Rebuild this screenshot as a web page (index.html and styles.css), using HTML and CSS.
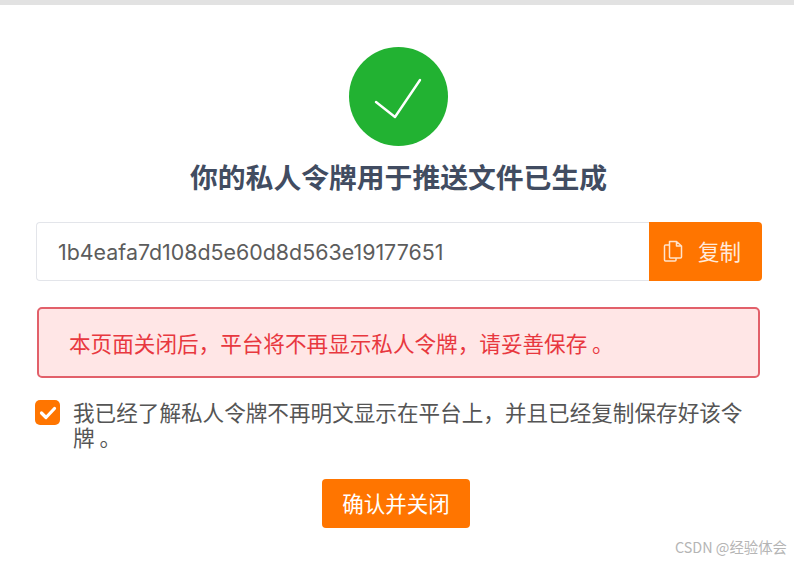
FILE: index.html
```html
<!DOCTYPE html>
<html lang="zh-CN">
  <head>
    <meta charset="UTF-8" />
    <title>私人令牌</title>
    <link rel="stylesheet" href="styles.css">
  </head>
  <body>
    <div id="root">
      <div class="top-bar"></div>
      <div class="success-icon">
        <svg width="48" height="42" viewBox="0 0 48 42">
          <path d="M2 25 L21 40 L46 3" fill="none" stroke="#fff" stroke-width="2.4" stroke-linecap="round" stroke-linejoin="round" />
        </svg>
      </div>
      <h1 class="title">你的私人令牌用于推送文件已生成</h1>
      <div class="token-row">
        <div class="token-text">1b4eafa7d108d5e60d8d563e19177651</div>
        <button class="copy-btn">
          <svg width="20" height="22" viewBox="0 0 20 22">
            <path d="M6.5 1.5 H13.5 L18.5 6 V17 Q18.5 18 17.5 18 H7.5 Q6.5 18 6.5 17 Z M13.5 1.5 V6 H18.5 M6.5 5 H2.5 Q1.5 5 1.5 6 V20 Q1.5 21 2.5 21 H12 Q13 21 13 20 V18" fill="none" stroke="#ffe3cc" stroke-width="1.5" stroke-linejoin="round" />
          </svg>
          <span>复制</span>
        </button>
      </div>
      <div class="alert">本页面关闭后，平台将不再显示私人令牌，请妥善保存 。</div>
      <div class="agree">
        <span class="checkbox">
          <svg width="18" height="14" viewBox="0 0 18 14">
            <path d="M2.5 7 L7 11.5 L15.5 2.5" fill="none" stroke="#fff" stroke-width="3.2" stroke-linecap="round" stroke-linejoin="round" />
          </svg>
        </span>
        <p class="agree-text">我已经了解私人令牌不再明文显示在平台上，并且已经复制保存好该令牌 。</p>
      </div>
      <div class="actions">
        <button class="confirm-btn">确认并关闭</button>
      </div>
      <div class="watermark">CSDN @经验体会</div>
    </div>
  </body>
</html>
```

FILE: styles.css
```css
* {
  margin: 0;
  padding: 0;
  box-sizing: border-box;
}
html,
body {
  width: 794px;
  height: 562px;
  overflow: hidden;
  background-color: #fff;
}
body {
  font-family: "Noto Sans CJK SC", "Noto Sans", sans-serif;
}
#root {
  position: relative;
  width: 794px;
  height: 562px;
  display: flex;
  flex-direction: column;
}
.top-bar {
  height: 5px;
  background-color: #e2e2e2;
}
.success-icon {
  width: 99px;
  height: 99px;
  margin: 42px auto 0;
  transform: translateX(1px);
  border-radius: 50%;
  background-color: #22b232;
  display: flex;
  justify-content: center;
  align-items: center;
}
.success-icon svg {
  margin-top: 2px;
}
.title {
  margin-top: 12px;
  padding-left: 3px;
  height: 36px;
  line-height: 36px;
  font-size: 27.8px;
  font-weight: 700;
  color: #414c61;
  text-align: center;
}
.token-row {
  display: flex;
  height: 59px;
  margin: 28px 32px 0 36px;
}
.token-text {
  flex: 1;
  padding-left: 21px;
  line-height: 59px;
  font-family: "Inter", "Noto Sans", sans-serif;
  font-size: 21.4px;
  color: #5c5c5c;
  border: 1px solid #e3e5ea;
  border-right: none;
  border-radius: 4px 0 0 4px;
}
.copy-btn {
  width: 113px;
  padding: 0 0 2px 14px;
  display: flex;
  align-items: center;
  gap: 15px;
  font-family: inherit;
  font-size: 21.5px;
  color: #ffeadb;
  background-color: #ff7500;
  border: none;
  border-radius: 0 4px 4px 0;
}
.alert {
  height: 71px;
  margin: 26px 34px 0 37px;
  padding-left: 30px;
  line-height: 68px;
  font-size: 21.6px;
  color: #e8383f;
  background-color: #ffe6e6;
  border: 2px solid #e2606a;
  border-radius: 5px;
}
.agree {
  display: flex;
  margin: 22px 40px 0 35px;
}
.checkbox {
  flex: none;
  width: 25px;
  height: 25px;
  display: flex;
  justify-content: center;
  align-items: center;
  background-color: #ff7500;
  border-radius: 5px;
}
.agree-text {
  margin: -1px 0 0 13px;
  font-size: 21.6px;
  line-height: 25px;
  color: #555;
}
.actions {
  display: flex;
  justify-content: center;
  margin-top: 30px;
}
.confirm-btn {
  width: 148px;
  height: 49px;
  margin-right: 2px;
  padding-bottom: 3px;
  font-family: inherit;
  font-size: 21.5px;
  color: #fff;
  background-color: #ff7500;
  border: none;
  border-radius: 4px;
}
.watermark {
  position: absolute;
  right: 7px;
  bottom: 5px;
  font-size: 14.4px;
  color: #b5b5b5;
}
```
